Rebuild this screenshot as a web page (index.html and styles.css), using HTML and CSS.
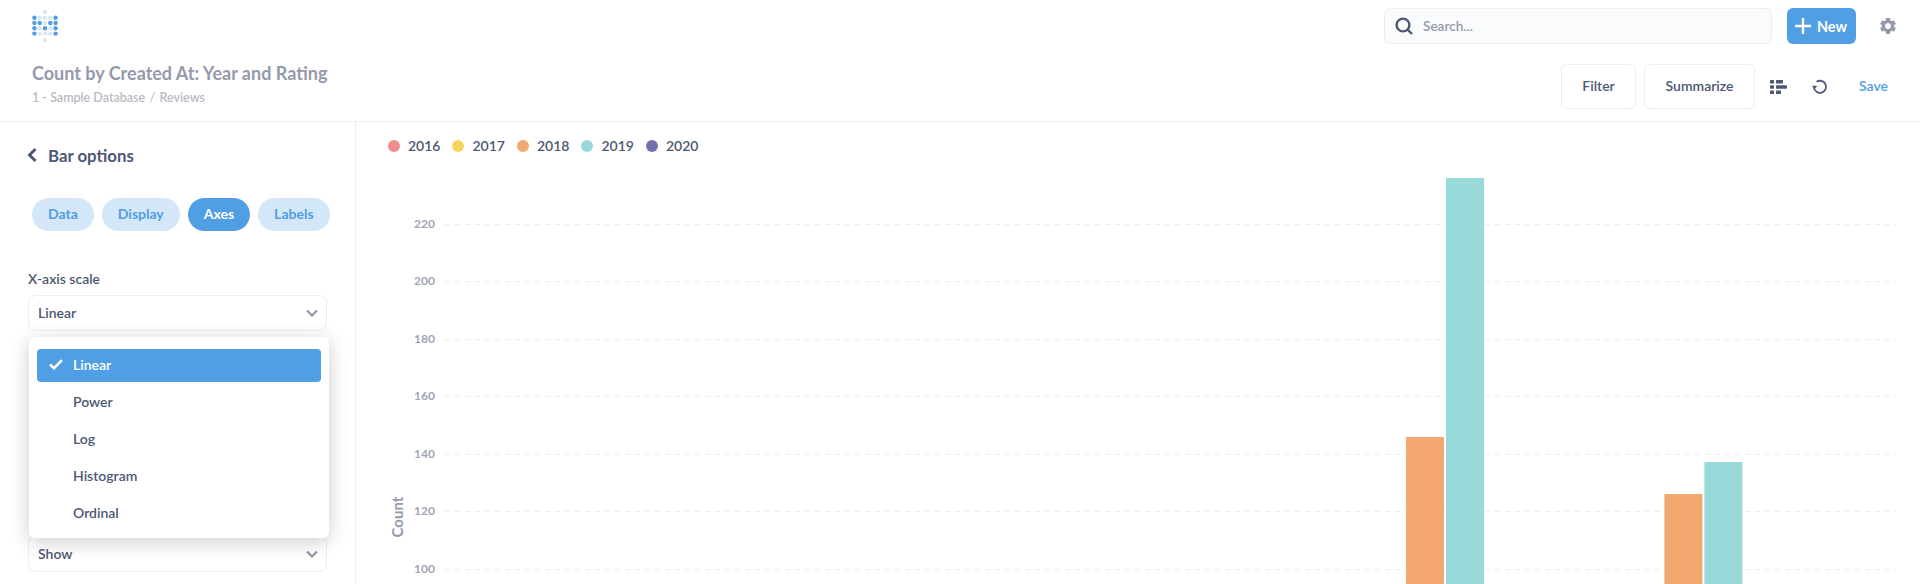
FILE: index.html
```html
<!DOCTYPE html>
<html lang="en">
<head>
  <meta charset="UTF-8" />
  <title>Count by Created At: Year and Rating</title>
  <link rel="stylesheet" href="styles.css">
</head>
<body>
  <nav class="topbar">
    <svg class="logo" width="26" height="32" viewBox="0 0 26 32">
      <g fill="#d6e8f8">
        <circle cx="13" cy="2" r="2.2"/><circle cx="13" cy="30" r="2.2"/>
        <circle cx="7.7" cy="7.7" r="2.2"/><circle cx="13" cy="7.7" r="2.2"/><circle cx="18.3" cy="7.7" r="2.2"/>
        <circle cx="13" cy="13" r="2.2"/>
        <circle cx="7.7" cy="18.3" r="2.2"/><circle cx="18.3" cy="18.3" r="2.2"/>
        <circle cx="7.7" cy="23.6" r="2.2"/><circle cx="13" cy="23.6" r="2.2"/><circle cx="18.3" cy="23.6" r="2.2"/>
      </g>
      <g fill="#509ee3">
        <circle cx="2.4" cy="7.7" r="2.2"/><circle cx="23.6" cy="7.7" r="2.2"/>
        <circle cx="2.4" cy="13" r="2.2"/><circle cx="7.7" cy="13" r="2.2"/><circle cx="18.3" cy="13" r="2.2"/><circle cx="23.6" cy="13" r="2.2"/>
        <circle cx="2.4" cy="18.3" r="2.2"/><circle cx="13" cy="18.3" r="2.2"/><circle cx="23.6" cy="18.3" r="2.2"/>
        <circle cx="2.4" cy="23.6" r="2.2"/><circle cx="23.6" cy="23.6" r="2.2"/>
      </g>
    </svg>
    <div class="search">
      <svg width="18" height="18" viewBox="0 0 18 18" fill="none" stroke="#4c5773" stroke-width="2.4">
        <circle cx="8" cy="8" r="6.4"/><path d="M12.5 12.5 L17 17"/>
      </svg>
      <span>Search...</span>
    </div>
    <button class="new-btn">
      <svg width="16" height="16" viewBox="0 0 16 16" stroke="#fff" stroke-width="2.4"><path d="M8 0V16M0 8H16"/></svg>
      New
    </button>
    <svg class="gear" width="20" height="20" viewBox="0 0 24 24" fill="#949aab"><path d="M19.14 12.94c.04-.3.06-.61.06-.94 0-.32-.02-.64-.07-.94l2.03-1.58c.18-.14.23-.41.12-.61l-1.92-3.32c-.12-.22-.37-.29-.59-.22l-2.39.96c-.5-.38-1.03-.7-1.62-.94l-.36-2.54c-.04-.24-.24-.41-.48-.41h-3.84c-.24 0-.43.17-.47.41l-.36 2.54c-.59.24-1.13.57-1.62.94l-2.39-.96c-.22-.08-.47 0-.59.22L2.74 8.87c-.12.21-.08.47.12.61l2.03 1.58c-.05.3-.09.63-.09.94s.02.64.07.94l-2.03 1.58c-.18.14-.23.41-.12.61l1.92 3.32c.12.22.37.29.59.22l2.39-.96c.5.38 1.03.7 1.62.94l.36 2.54c.05.24.24.41.48.41h3.84c.24 0 .44-.17.47-.41l.36-2.54c.59-.24 1.13-.56 1.62-.94l2.39.96c.22.08.47 0 .59-.22l1.92-3.32c.12-.22.07-.47-.12-.61l-2.01-1.58zM12 15.6c-1.98 0-3.6-1.62-3.6-3.6s1.62-3.6 3.6-3.6 3.6 1.62 3.6 3.6-1.62 3.6-3.6 3.6z"/></svg>
  </nav>

  <header class="question">
    <div class="question-info">
      <h1>Count by Created At: Year and Rating</h1>
      <p>1 - Sample Database <span class="slash">/</span> Reviews</p>
    </div>
    <div class="actions">
      <button class="outline-btn filter-btn">Filter</button>
      <button class="outline-btn summarize-btn">Summarize</button>
      <svg class="viz-icon" width="17" height="14" viewBox="0 0 17 14" fill="#4c5773">
        <rect x="0" y="0" width="4" height="3.4" rx=".6"/><rect x="6" y="0" width="7" height="3.4" rx=".6"/>
        <rect x="0" y="5.3" width="4" height="3.4" rx=".6"/><rect x="6" y="5.3" width="11" height="3.4" rx=".6"/>
        <rect x="0" y="10.6" width="4" height="3.4" rx=".6"/><rect x="6" y="10.6" width="5" height="3.4" rx=".6"/>
      </svg>
      <svg class="refresh-icon" width="16" height="16" viewBox="0 0 16 16" fill="none" stroke="#4c5773" stroke-width="1.8">
        <path d="M4.6 2.8 A6 6 0 1 1 2 8.5"/><path d="M0 6.4 L2.4 10.4 L5.2 7" fill="#4c5773" stroke="none"/>
      </svg>
      <span class="save">Save</span>
    </div>
  </header>

  <div class="workspace">
    <aside class="sidebar">
      <div class="sidebar-title">
        <svg width="12" height="16" viewBox="0 0 12 16" fill="none" stroke="#4c5773" stroke-width="3"><path d="M9.5 2 L3.5 8 L9.5 14"/></svg>
        <span>Bar options</span>
      </div>
      <div class="pills">
        <span class="pill">Data</span>
        <span class="pill">Display</span>
        <span class="pill active">Axes</span>
        <span class="pill">Labels</span>
      </div>
      <div class="field">
        <label>X-axis scale</label>
        <div class="select">
          <span>Linear</span>
          <svg width="12" height="8" viewBox="0 0 12 8" fill="none" stroke="#949aab" stroke-width="2.2"><path d="M1 1.5 L6 6.5 L11 1.5"/></svg>
        </div>
      </div>
      <div class="popover">
        <div class="option selected">
          <svg width="14" height="11" viewBox="0 0 14 11" fill="none" stroke="#fff" stroke-width="2.6"><path d="M1 5.5 L5 9.2 L13 1.2"/></svg>
          Linear
        </div>
        <div class="option">Power</div>
        <div class="option">Log</div>
        <div class="option">Histogram</div>
        <div class="option">Ordinal</div>
      </div>
      <div class="select show-select">
        <span>Show</span>
        <svg width="12" height="8" viewBox="0 0 12 8" fill="none" stroke="#949aab" stroke-width="2.2"><path d="M1 1.5 L6 6.5 L11 1.5"/></svg>
      </div>
    </aside>

    <main class="chart">
      <ul class="legend">
        <li><i class="dot c2016"></i>2016</li>
        <li><i class="dot c2017"></i>2017</li>
        <li><i class="dot c2018"></i>2018</li>
        <li><i class="dot c2019"></i>2019</li>
        <li><i class="dot c2020"></i>2020</li>
      </ul>
      <!-- viewBox uses page coordinates so the plot numbers read straight off the screenshot -->
      <svg class="plot" width="1564" height="422" viewBox="356 162 1564 422">
        <g class="grid">
          <path d="M445 224.5H1896"/><path d="M445 281.5H1896"/><path d="M445 339.5H1896"/>
          <path d="M445 396.5H1896"/><path d="M445 454.5H1896"/><path d="M445 511.5H1896"/><path d="M445 569.5H1896"/>
        </g>
        <g class="ticks">
          <text x="435" y="228">220</text><text x="435" y="285">200</text><text x="435" y="343">180</text>
          <text x="435" y="400">160</text><text x="435" y="458">140</text><text x="435" y="515">120</text><text x="435" y="573">100</text>
        </g>
        <text class="axis-name" transform="translate(403 517) rotate(-90)">Count</text>
        <rect x="1406" y="437" width="38" height="147" fill="#f2a86f"/>
        <rect x="1446" y="178" width="38" height="406" fill="#98d9d9"/>
        <rect x="1664.4" y="494" width="38" height="90" fill="#f2a86f"/>
        <rect x="1704.4" y="462" width="38" height="122" fill="#98d9d9"/>
      </svg>
    </main>
  </div>
</body>
</html>
```

FILE: styles.css
```css
* {
  box-sizing: border-box;
}
body {
  margin: 0;
  height: 584px;
  overflow: hidden;
  font-family: Lato, "Open Sans", sans-serif;
  font-weight: 600;
  font-size: 14px;
  color: #4c5773;
  background: #fff;
}
button {
  font: inherit;
  cursor: pointer;
}

/* top bar */
.topbar {
  display: flex;
  align-items: flex-start;
  height: 44px;
  padding: 8px 22px 0 32px;
}
.logo {
  margin-top: 2px;
  margin-right: auto;
}
.search {
  display: flex;
  align-items: center;
  gap: 10px;
  width: 388px;
  height: 36px;
  padding-left: 10px;
  background: #f9fbfc;
  border: 1px solid #eeecec;
  border-radius: 6px;
  color: #949aab;
  font-size: 13.6px;
}
.new-btn {
  display: flex;
  align-items: center;
  gap: 6px;
  width: 69px;
  height: 36px;
  margin-left: 15px;
  padding: 0 0 0 8px;
  border: none;
  border-radius: 6px;
  background: #509ee3;
  color: #fff;
  font-size: 14.4px;
  font-weight: 700;
}
.gear {
  margin: 8px 0 0 22px;
}

/* question header */
.question {
  display: flex;
  justify-content: space-between;
  height: 78px;
  padding: 17px 32px 0;
  border-bottom: 1px solid #eeecec;
}
.question h1 {
  margin: 0;
  font-size: 18px;
  font-weight: 700;
  line-height: 24px;
  color: #949aab;
}
.question p {
  margin: 5px 0 0;
  font-size: 12.5px;
  line-height: 16px;
  color: #b8bbc3;
}
.slash {
  margin: 0 1.2px;
  font-weight: 400;
}
.actions {
  display: flex;
  align-items: center;
  height: 45px;
  margin-top: 3px;
}
.outline-btn {
  height: 45px;
  padding: 0 0 2px;
  background: #fff;
  border: 1px solid #eeecec;
  border-radius: 6px;
  color: #4c5773;
}
.filter-btn {
  width: 75px;
}
.summarize-btn {
  width: 111px;
  margin-left: 8px;
}
.viz-icon {
  margin-left: 15px;
}
.refresh-icon {
  margin-left: 25px;
}
.save {
  margin: 0 0 2px 31px;
  color: #509ee3;
}

/* body of the page */
.workspace {
  display: flex;
  height: 462px;
}
.sidebar {
  position: relative;
  flex: none;
  width: 356px;
  padding: 0 28px;
  border-right: 1px solid #eeecec;
}
.sidebar-title {
  display: flex;
  align-items: center;
  gap: 10px;
  height: 24px;
  margin: 21px 0 0 -2px;
  font-size: 16.8px;
  font-weight: 700;
}
.pills {
  display: flex;
  gap: 8px;
  margin: 31px 0 0 4px;
}
.pill {
  height: 33px;
  padding: 0 16px;
  line-height: 32px;
  border-radius: 17px;
  background: #d3e7f8;
  color: #509ee3;
  font-weight: 700;
}
.pill.active {
  background: #509ee3;
  color: #fff;
}
.field {
  margin-top: 39px;
}
.field label {
  display: block;
  margin-bottom: 8px;
  line-height: 17px;
}
.select {
  display: flex;
  align-items: center;
  justify-content: space-between;
  width: 299px;
  height: 36px;
  padding: 0 8px 1px 9px;
  background: #fff;
  border: 1px solid #eeecec;
  border-radius: 8px;
}
.select span {
  margin-bottom: 1px;
}
.show-select {
  margin-top: 205px;
}
.popover {
  position: absolute;
  top: 215px;
  left: 29px;
  width: 300px;
  height: 201px;
  padding: 12px 8px;
  background: #fff;
  border-radius: 6px;
  box-shadow: 0 4px 20px rgba(0, 0, 0, 0.2);
}
.option {
  display: flex;
  align-items: center;
  height: 33px;
  margin-bottom: 4px;
  padding: 0 0 3px 36px;
  border-radius: 4px;
}
.option.selected {
  position: relative;
  background: #509ee3;
  color: #fff;
}
.option.selected svg {
  position: absolute;
  left: 12px;
}

/* chart */
.chart {
  flex: 1;
  min-width: 0;
}
.legend {
  display: flex;
  align-items: flex-start;
  gap: 12px;
  height: 40px;
  margin: 0;
  padding: 15px 0 0 32px;
  list-style: none;
  line-height: 17px;
}
.legend li {
  display: flex;
  align-items: center;
  gap: 8px;
}
.dot {
  flex: none;
  width: 12px;
  height: 12px;
  border-radius: 50%;
}
.c2016 { background: #ef8c8c; }
.c2017 { background: #f9d45c; }
.c2018 { background: #f2a86f; }
.c2019 { background: #98d9d9; }
.c2020 { background: #7172ad; }
.plot {
  display: block;
}
.grid path {
  stroke: #eeeeee;
  stroke-width: 1;
  stroke-dasharray: 5 5;
}
.ticks text {
  text-anchor: end;
  font-size: 12px;
  font-weight: 700;
  fill: #a0a5b6;
}
.axis-name {
  text-anchor: middle;
  font-size: 15px;
  font-weight: 700;
  fill: #949aab;
}
```
